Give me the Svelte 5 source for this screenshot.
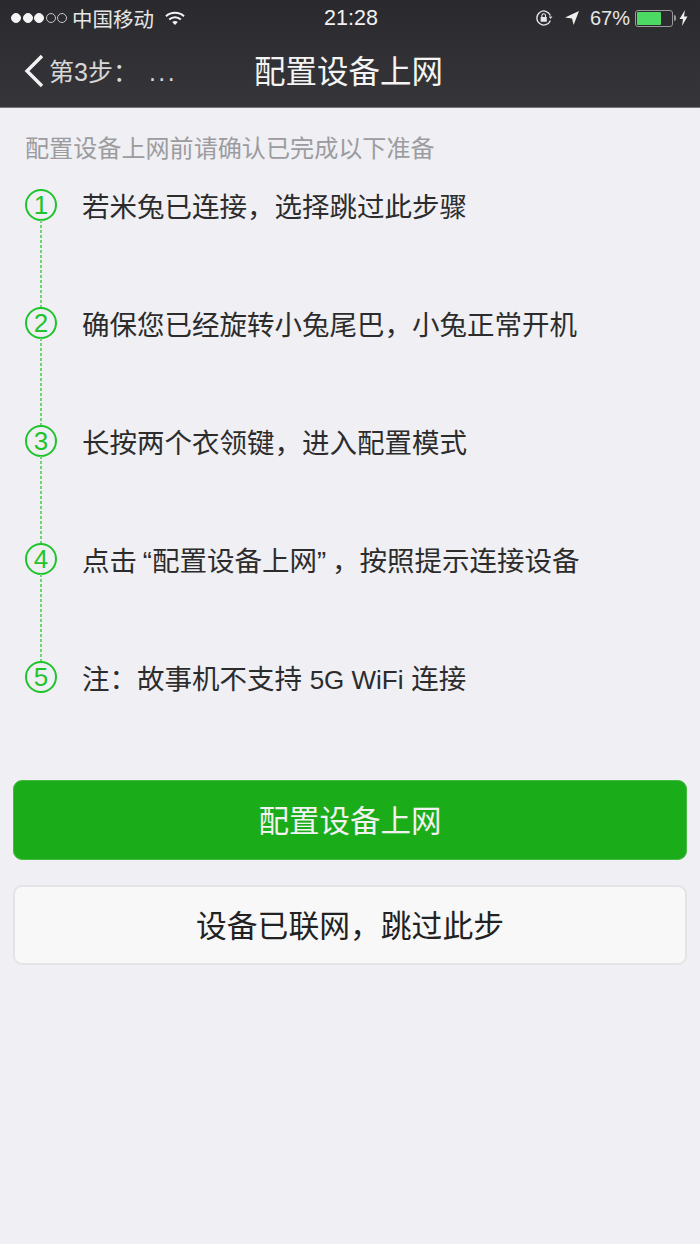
<script>
  const comma = '\uFF0C';
  const colon = '\uFF1A';
  const steps = [
    `若米兔已连接${comma}选择跳过此步骤`,
    `确保您已经旋转小兔尾巴${comma}小兔正常开机`,
    `长按两个衣领键${comma}进入配置模式`,
    `点击“配置设备上网”${comma}按照提示连接设备`,
    `注${colon}故事机不支持 5G WiFi 连接`
  ];
  const signal = [1, 1, 1, 0, 0];

  // quotes and latin words are set a little differently from the CJK run
  const parts = (text) => text.split(/([“”]|5G WiFi)/).filter(Boolean);
</script>

<div class="page">
  <header class="top">
    <div class="status">
      <div class="left">
        <span class="dots">
          {#each signal as on}
            <i class:on></i>
          {/each}
        </span>
        <span class="carrier">中国移动</span>
        <svg class="wifi" width="20" height="15" viewBox="0 0 20 15">
          <path d="M1 5.2 C6 .6 14 .6 19 5.2" fill="none" stroke="#f4f4f4" stroke-width="2" />
          <path d="M4.2 8.4 C7.6 5.4 12.4 5.4 15.8 8.4" fill="none" stroke="#f4f4f4" stroke-width="2" />
          <path d="M7.2 11 C9 9.6 11 9.6 12.8 11 L10 14 Z" fill="#f4f4f4" />
        </svg>
      </div>
      <div class="time">21:28</div>
      <div class="right">
        <svg class="lock" width="18" height="18" viewBox="0 0 18 18">
          <path d="M15.4 11.5 A7 7 0 1 1 15.4 6.5" fill="none" stroke="#e8e8e8" stroke-width="1.3" />
          <path d="M13.8 7.5 L17.4 7.5 L15.6 10 Z" fill="#e8e8e8" />
          <rect x="5.6" y="8" width="6.2" height="4.8" rx=".6" fill="#e8e8e8" />
          <path d="M6.9 8 V6.6 A1.8 1.8 0 0 1 10.5 6.6 V8" fill="none" stroke="#e8e8e8" stroke-width="1.1" />
        </svg>
        <svg class="arrow" width="16" height="16" viewBox="0 0 16 16">
          <path d="M15 1 L1 7.4 L8 8.4 L9.6 15 Z" fill="#efefef" />
        </svg>
        <span class="pct">67%</span>
        <span class="battery"><span class="fill"></span></span>
        <span class="nub"></span>
        <svg class="bolt" width="9" height="16" viewBox="0 0 9 16">
          <path d="M6 0 L0.5 9 L4 9 L3 16 L8.5 6.5 L5 6.5 Z" fill="#efefef" />
        </svg>
      </div>
    </div>
    <nav class="bar">
      <div class="back">
        <svg width="24" height="36" viewBox="0 0 24 36">
          <path d="M20 3 L5 18 L20 33" fill="none" stroke="#f2f2f2" stroke-width="3.4" />
        </svg>
        <span class="back-text">第3步{colon}</span><span class="more">...</span>
      </div>
      <h1>配置设备上网</h1>
    </nav>
  </header>

  <main>
    <p class="note">配置设备上网前请确认已完成以下准备</p>
    <ol class="steps">
      {#each steps as text, i}
        <li>
          <span class="num">{i + 1}</span>
          <span class="label">
            {#each parts(text) as part}
              {#if part === '“' || part === '”'}
                <span class="quote" class:open={part === '“'}>{part}</span>
              {:else if part === '5G WiFi'}
                <span class="latin">{part}</span>
              {:else}
                {part}
              {/if}
            {/each}
          </span>
        </li>
      {/each}
    </ol>
    <button class="btn primary">配置设备上网</button>
    <button class="btn plain">设备已联网{comma}跳过此步</button>
  </main>
</div>

<style>
  :global(body) {
    margin: 0;
    background: #efeff4;
  }

  .page {
    width: 700px;
    height: 1244px;
    overflow: hidden;
    background: #efeff4;
    font-family: "Liberation Sans", "Noto Sans CJK SC", sans-serif;
  }

  .top {
    height: 107px;
    background: linear-gradient(#2a2a2e, #36363a);
    border-bottom: 1px solid #77777a;
    color: #f2f2f2;
  }

  .status {
    height: 36px;
    display: grid;
    grid-template-columns: 1fr auto 1fr;
    align-items: center;
    padding: 0 12px 0 11px;
  }

  .left,
  .right {
    display: flex;
    align-items: center;
  }

  .right {
    justify-content: flex-end;
  }

  .dots {
    display: flex;
    gap: 1.5px;
  }

  .dots i {
    width: 10px;
    height: 10px;
    box-sizing: border-box;
    border: 1px solid #c8c8c8;
    border-radius: 50%;
  }

  .dots i.on {
    background: #f4f4f4;
    border-color: #f4f4f4;
  }

  .carrier {
    margin-left: 5px;
    font-size: 20.5px;
    color: #e6e6e6;
  }

  .wifi {
    margin-left: 11px;
  }

  .time {
    margin-left: 3px;
    font-size: 21.5px;
    color: #f2f2f2;
  }

  .lock {
    margin-right: 11px;
  }

  .arrow {
    margin-right: 10px;
  }

  .pct {
    font-size: 20px;
    color: #e6e6e6;
    margin-right: 5px;
  }

  .battery {
    width: 38px;
    height: 17px;
    box-sizing: border-box;
    border: 1px solid #9a9a9a;
    border-radius: 3px;
    padding: 1px;
    display: flex;
  }

  .fill {
    width: 24px;
    background: #4cd964;
    border-radius: 1px;
  }

  .nub {
    width: 2px;
    height: 6px;
    margin: 0 3px 0 1px;
    background: #9a9a9a;
    border-radius: 0 2px 2px 0;
  }

  .bar {
    height: 71px;
    position: relative;
    display: flex;
    align-items: center;
    justify-content: center;
  }

  .back {
    position: absolute;
    left: 22px;
    top: 16px;
    display: flex;
    align-items: center;
    font-size: 25px;
    line-height: 36px;
    color: #d8d8d8;
  }

  .back svg {
    margin-right: 3px;
  }

  .back-text,
  .more {
    padding-top: 2px;
  }

  .more {
    margin-left: 11px;
    letter-spacing: 2.5px;
  }

  h1 {
    margin: 0 0 5px -3px;
    font-size: 31.5px;
    font-weight: 400;
    color: #f4f4f4;
  }

  main {
    padding: 24px 13px 0;
    display: flex;
    flex-direction: column;
  }

  .note {
    margin: 0 0 0 12px;
    font-size: 24.1px;
    line-height: 34px;
    color: #9c9c9f;
  }

  .steps {
    list-style: none;
    margin: 23px 0 0 12px;
    padding: 0;
    display: flex;
    flex-direction: column;
    gap: 86px;
  }

  .steps li {
    position: relative;
    height: 32px;
    display: flex;
    align-items: center;
  }

  .steps li:not(:last-child)::after {
    content: "";
    position: absolute;
    left: 15px;
    top: 31px;
    width: 2px;
    height: 88px;
    background: repeating-linear-gradient(#6ed474 0 3px, transparent 3px 5px);
  }

  .num {
    width: 32px;
    height: 32px;
    box-sizing: border-box;
    border: 2px solid #1fc42c;
    border-radius: 50%;
    display: flex;
    align-items: center;
    justify-content: center;
    font-size: 26px;
    line-height: 1;
    color: #1fc42c;
  }

  .label {
    margin-left: 25px;
    padding-top: 5px;
    font-size: 27.5px;
    line-height: 32px;
    color: #2c2c2c;
    white-space: nowrap;
  }

  .quote {
    display: inline-block;
    width: 15px;
  }

  .quote.open {
    text-align: right;
  }

  .latin {
    font-size: 26px;
  }

  .btn {
    display: block;
    width: 100%;
    box-sizing: border-box;
    font-family: inherit;
    font-size: 30.5px;
    border-radius: 9px;
    padding: 0 0 3px;
  }

  .primary {
    height: 80px;
    margin-top: 87px;
    background: #1aad19;
    border: 1px solid #45bb44;
    color: #f2f2f2;
  }

  .plain {
    height: 80px;
    margin-top: 25px;
    font-size: 30.8px;
    background: #f8f8f8;
    border: 2px solid #e4e4e6;
    color: #222;
  }
</style>
